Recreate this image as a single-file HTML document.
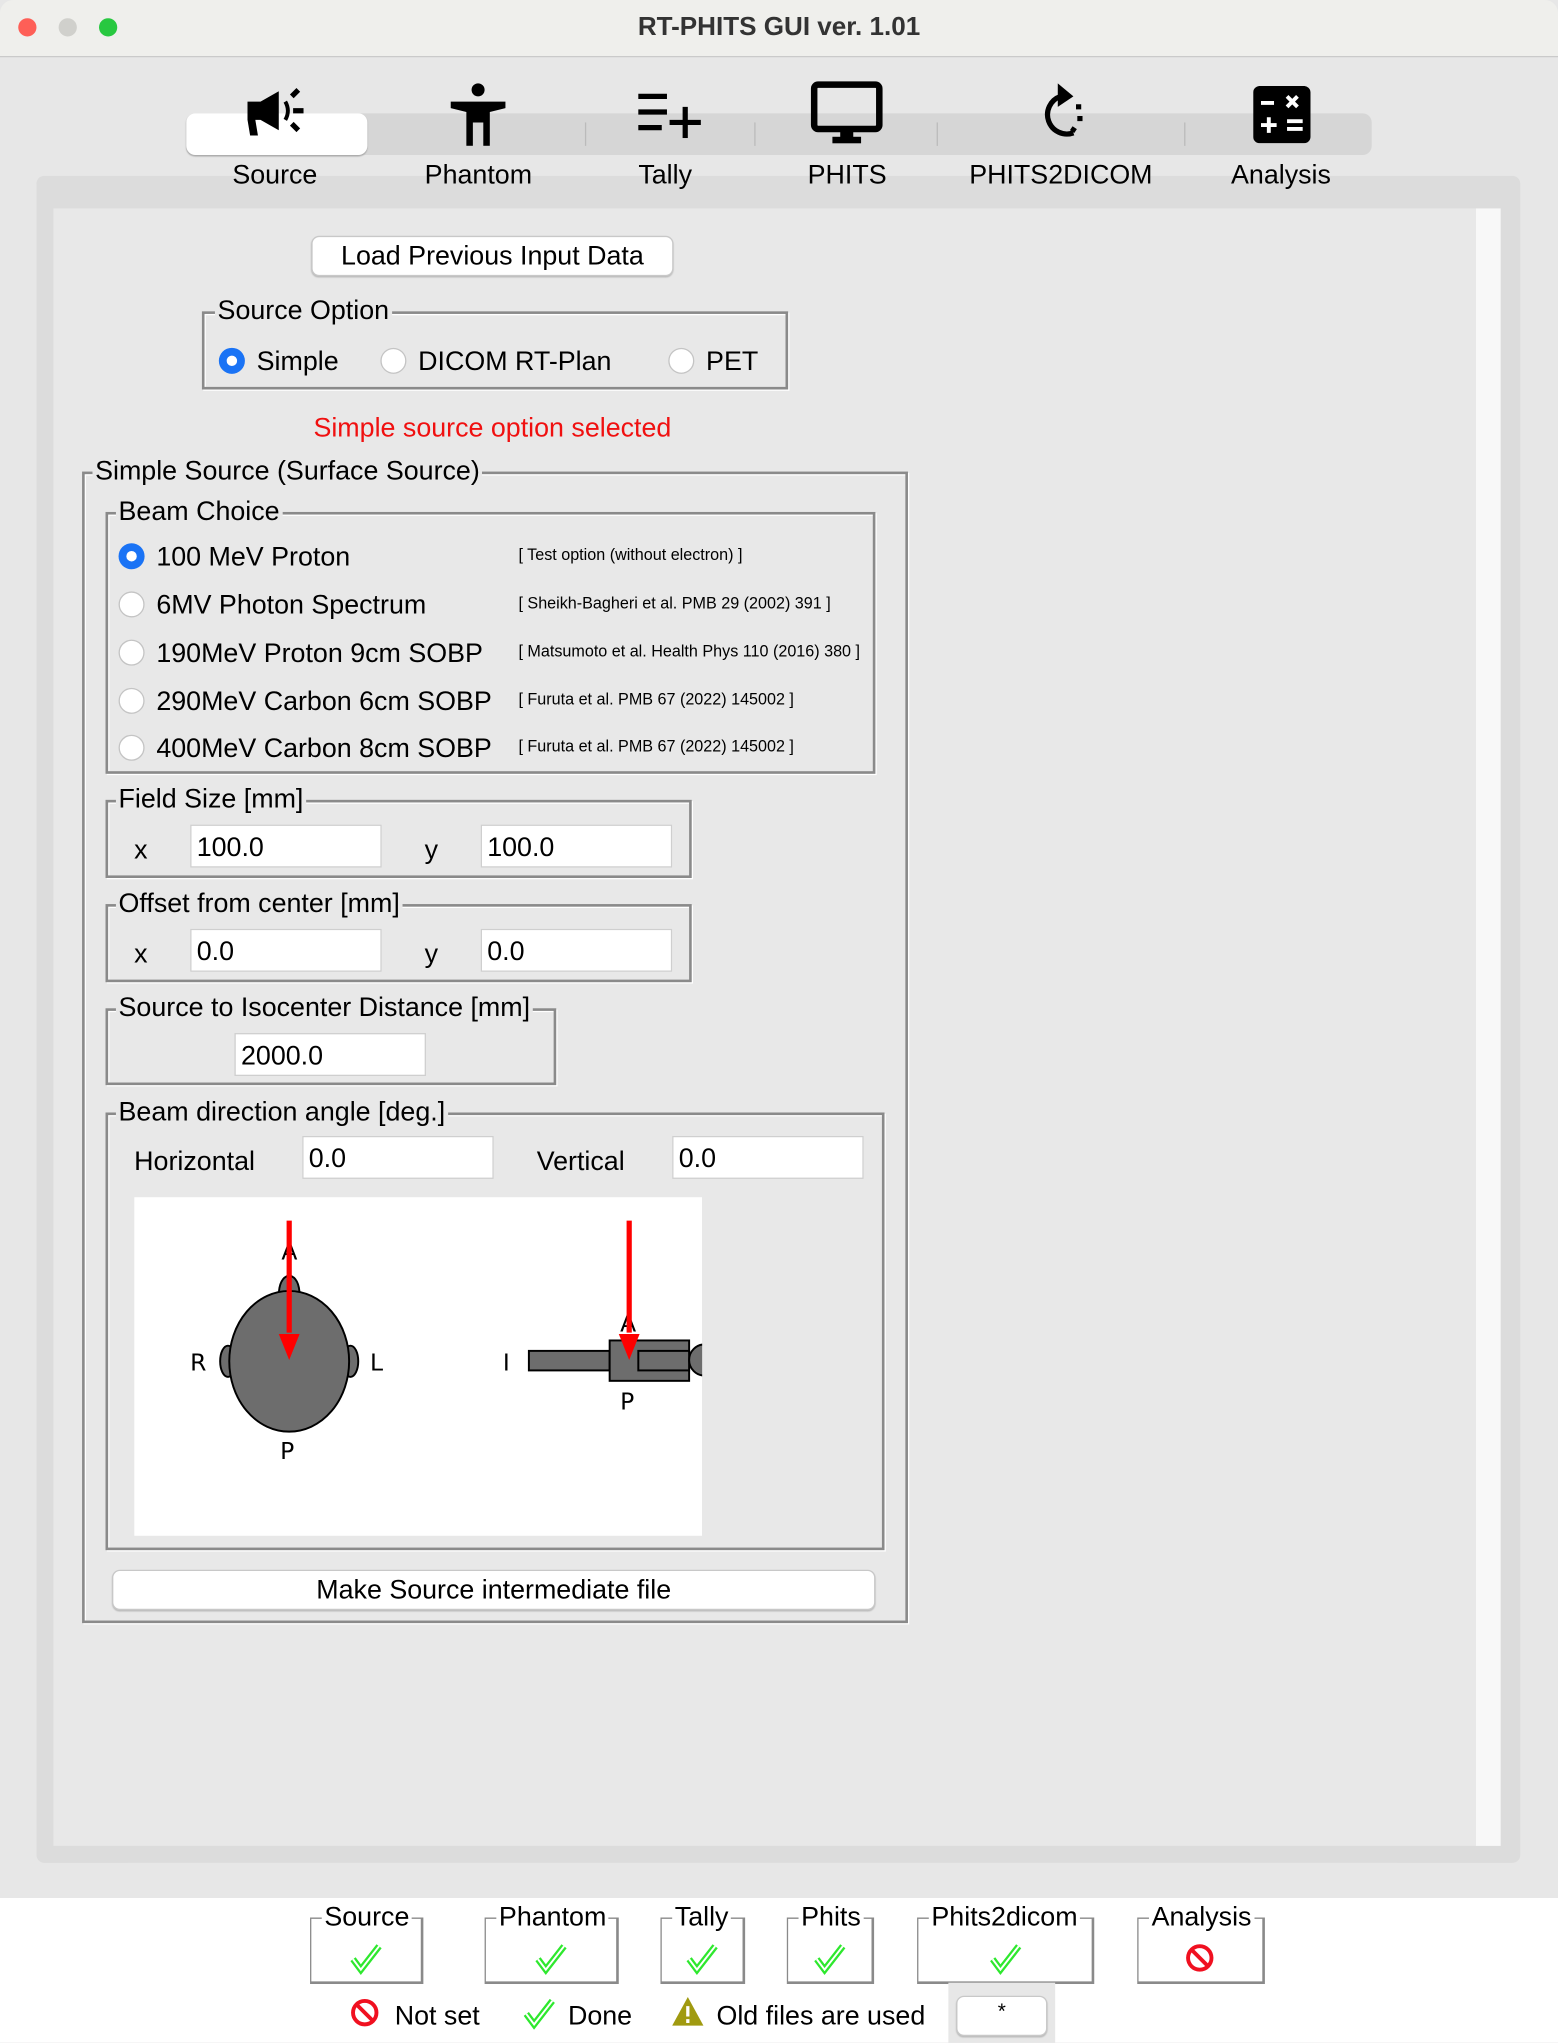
<!DOCTYPE html>
<html><head><meta charset="utf-8">
<style>
html,body{margin:0;padding:0;width:1558px;height:2042px;overflow:hidden;background:#e7e7e7}
#root{position:absolute;left:0;top:0;width:1196px;height:1568px;transform:scale(1.30268);transform-origin:0 0;font-family:"Liberation Sans",sans-serif;color:#000;background:#e7e7e7}
.a{position:absolute}
.t{position:absolute;white-space:nowrap;font-size:20.6px;line-height:26px;z-index:2}
.grp{position:absolute;border:2px solid #8a8a8a;box-shadow:inset 1px 1px 0 #fff,1px 1px 0 #fff}
.lg{position:absolute;top:-15px;left:8px;background:#e8e8e8;padding:0 2px;font-size:20.6px;line-height:26px;white-space:nowrap}
.inp{position:absolute;background:#fff;border:1px solid #cfcfcf;height:33px;font-size:20.6px;line-height:34px;padding-left:4px;box-sizing:border-box}
.btn{position:absolute;background:#fff;border:1px solid #c8c8c8;border-radius:6px;box-shadow:0 1px 1px #bbb;text-align:center;font-size:20.6px;box-sizing:border-box}
.rd{position:absolute;width:20px;height:20px;border-radius:50%;background:#fff;border:1px solid #c4c4c4;box-sizing:border-box}
.rd.on{background:#1a73f5;border:none}
.rd.on:after{content:"";position:absolute;left:6px;top:6px;width:8px;height:8px;border-radius:50%;background:#fff}
.ref{position:absolute;font-size:12.4px;white-space:nowrap}
.sb{position:absolute;border:2px solid #8a8a8a;border-top:1px solid #8a8a8a;border-left:1px solid #8a8a8a;background:#fff}
.sb .lg{background:#fff;top:-14px;left:8px}
</style></head><body><div id="root">
<!-- title bar -->
<div class="a" style="left:0;top:0;width:1196px;height:43px;background:#efefec;border-bottom:1px solid #c9c9c9;border-radius:10px 10px 0 0"></div>
<div class="a" style="left:14px;top:14px;width:14px;height:14px;border-radius:50%;background:#fe5f57"></div>
<div class="a" style="left:45px;top:14px;width:14px;height:14px;border-radius:50%;background:#d0d0cc"></div>
<div class="a" style="left:76px;top:14px;width:14px;height:14px;border-radius:50%;background:#28c840"></div>
<div class="t" style="left:0;width:1196px;text-align:center;top:8px;font-weight:bold;font-size:20px;color:#333">RT-PHITS GUI ver. 1.01</div>

<!-- panels -->
<div class="a" style="left:28px;top:135px;width:1139px;height:1295px;background:#dcdcdc;border-radius:6px"></div>
<div class="a" style="left:41px;top:160px;width:1092px;height:1257px;background:#e8e8e8"></div>
<div class="a" style="left:1133px;top:160px;width:19px;height:1257px;background:#f8f8f8"></div>

<!-- segmented -->
<div class="a" style="left:143px;top:87px;width:910px;height:32px;background:#d6d6d6;border-radius:7px"></div>
<div class="a" style="left:143px;top:87px;width:139px;height:32px;background:#fff;border-radius:7px;box-shadow:0 1px 1px #aaa"></div>
<div class="a" style="left:449px;top:94px;width:1px;height:18px;background:#bbb"></div>
<div class="a" style="left:579px;top:94px;width:1px;height:18px;background:#bbb"></div>
<div class="a" style="left:719px;top:94px;width:1px;height:18px;background:#bbb"></div>
<div class="a" style="left:909px;top:94px;width:1px;height:18px;background:#bbb"></div>
<!-- icons -->
<svg class="a" style="left:186px;top:64px" width="52" height="48" viewBox="0 0 52 48"><path d="M4 14h10l14-8v30l-14-8h-4l2 12h-6l-2-12z" fill="#000"/><path d="M33 14q4 7 0 14" stroke="#000" stroke-width="3" fill="none"/><path d="M38 10l5-5M39 21h8M38 31l5 5" stroke="#000" stroke-width="4"/></svg>
<svg class="a" style="left:344px;top:62px" width="46" height="50" viewBox="0 0 46 50"><circle cx="23" cy="7" r="5"/><path d="M2 16h42v5l-12 3v26h-5v-18h-8v18h-5v-26l-12-3z"/></svg>
<svg class="a" style="left:488px;top:70px" width="52" height="36" viewBox="0 0 52 36"><path d="M2 4h22M2 16h22M2 28h18M38 12v24M26 24h24" stroke="#000" stroke-width="4"/></svg>
<svg class="a" style="left:622px;top:62px" width="56" height="50" viewBox="0 0 56 50"><rect x="3" y="3" width="50" height="34" rx="3" fill="none" stroke="#000" stroke-width="5"/><rect x="23" y="37" width="10" height="7"/><rect x="17" y="43" width="22" height="5"/></svg>
<svg class="a" style="left:794px;top:62px" width="42" height="46" viewBox="0 0 42 46"><path d="M20 12A14 14 0 1 0 30 40" stroke="#000" stroke-width="4" fill="none"/><path d="M18 2l12 10-12 8z"/><path d="M34 18v4M35 27v4M31 36l-2 3" stroke="#000" stroke-width="4"/></svg>
<svg class="a" style="left:962px;top:66px" width="44" height="44" viewBox="0 0 44 44"><rect width="44" height="44" rx="5"/><path d="M6 13h10M26 8l8 8M34 8l-8 8M6 30h12M12 24v12M26 27h12M26 33h12" stroke="#fff" stroke-width="3"/></svg>
<div class="t" style="left:143px;width:136px;text-align:center;top:122px">Source</div>
<div class="t" style="left:326px;top:122px">Phantom</div>
<div class="t" style="left:490px;top:122px">Tally</div>
<div class="t" style="left:620px;top:122px">PHITS</div>
<div class="t" style="left:744px;top:122px">PHITS2DICOM</div>
<div class="t" style="left:945px;top:122px">Analysis</div>

<div class="btn" style="left:239px;top:181px;width:278px;height:31px;line-height:29px">Load Previous Input Data</div>

<div class="grp" style="left:155px;top:239px;width:446px;height:56px"><div class="lg">Source Option</div></div>
<div class="rd on" style="left:168px;top:267px"></div><div class="t" style="left:197px;top:265px">Simple</div>
<div class="rd" style="left:292px;top:267px"></div><div class="t" style="left:321px;top:265px">DICOM RT-Plan</div>
<div class="rd" style="left:513px;top:267px"></div><div class="t" style="left:542px;top:265px">PET</div>

<div class="t" style="left:0;width:756px;text-align:center;top:316px;color:#f01010">Simple source option selected</div>

<div class="grp" style="left:63px;top:362px;width:630px;height:880px"><div class="lg" style="left:6px">Simple Source (Surface Source)</div></div>

<div class="grp" style="left:81px;top:393px;width:587px;height:197px"><div class="lg" style="left:6px">Beam Choice</div></div>
<div class="rd on" style="left:91px;top:417px"></div><div class="t" style="left:120px;top:415px">100 MeV Proton</div><div class="ref" style="left:398px;top:419px">[ Test option (without electron) ]</div>
<div class="rd" style="left:91px;top:454px"></div><div class="t" style="left:120px;top:452px">6MV Photon Spectrum</div><div class="ref" style="left:398px;top:456px">[ Sheikh-Bagheri et al. PMB 29 (2002) 391 ]</div>
<div class="rd" style="left:91px;top:491px"></div><div class="t" style="left:120px;top:489px">190MeV Proton 9cm SOBP</div><div class="ref" style="left:398px;top:493px">[ Matsumoto et al. Health Phys 110 (2016) 380 ]</div>
<div class="rd" style="left:91px;top:528px"></div><div class="t" style="left:120px;top:526px">290MeV Carbon 6cm SOBP</div><div class="ref" style="left:398px;top:530px">[ Furuta et al. PMB 67 (2022) 145002 ]</div>
<div class="rd" style="left:91px;top:564px"></div><div class="t" style="left:120px;top:562px">400MeV Carbon 8cm SOBP</div><div class="ref" style="left:398px;top:566px">[ Furuta et al. PMB 67 (2022) 145002 ]</div>

<div class="grp" style="left:81px;top:614px;width:446px;height:56px"><div class="lg" style="left:6px">Field Size [mm]</div></div>
<div class="t" style="left:103px;top:640px">x</div><div class="inp" style="left:146px;top:633px;width:147px">100.0</div>
<div class="t" style="left:326px;top:640px">y</div><div class="inp" style="left:369px;top:633px;width:147px">100.0</div>

<div class="grp" style="left:81px;top:694px;width:446px;height:56px"><div class="lg" style="left:6px">Offset from center [mm]</div></div>
<div class="t" style="left:103px;top:720px">x</div><div class="inp" style="left:146px;top:713px;width:147px">0.0</div>
<div class="t" style="left:326px;top:720px">y</div><div class="inp" style="left:369px;top:713px;width:147px">0.0</div>

<div class="grp" style="left:81px;top:774px;width:342px;height:55px"><div class="lg" style="left:6px">Source to Isocenter Distance [mm]</div></div>
<div class="inp" style="left:180px;top:793px;width:147px">2000.0</div>

<div class="grp" style="left:81px;top:854px;width:594px;height:332px"><div class="lg" style="left:6px">Beam direction angle [deg.]</div></div>
<div class="t" style="left:103px;top:879px">Horizontal</div><div class="inp" style="left:232px;top:872px;width:147px">0.0</div>
<div class="t" style="left:412px;top:879px">Vertical</div><div class="inp" style="left:516px;top:872px;width:147px">0.0</div>

<svg class="a" style="left:103px;top:919px" width="436" height="260" viewBox="0 0 436 260" font-family="DejaVu Sans, sans-serif" font-size="18">
<rect width="436" height="260" fill="#fff"/>
<path d="M111 76q0-14 8-16q8 2 8 16z" fill="#6d6d6d" stroke="#000" stroke-width="1.5"/>
<ellipse cx="72" cy="126" rx="6" ry="12" fill="#6d6d6d" stroke="#000" stroke-width="1.5"/>
<ellipse cx="166" cy="126" rx="6" ry="12" fill="#6d6d6d" stroke="#000" stroke-width="1.5"/>
<ellipse cx="119" cy="126" rx="46" ry="54" fill="#6d6d6d" stroke="#000" stroke-width="1.5"/>
<text x="113" y="48">A</text>
<text x="43" y="133">R</text><text x="181" y="133">L</text><text x="112" y="201">P</text>
<line x1="119" y1="18" x2="119" y2="104" stroke="#f00" stroke-width="4"/>
<path d="M111 105h16l-8 20z" fill="#f00"/>
<rect x="303" y="118" width="62" height="15" fill="#6d6d6d" stroke="#000" stroke-width="1.5"/>
<rect x="365" y="110" width="61" height="31" fill="#6d6d6d" stroke="#000" stroke-width="1.5"/>
<rect x="387" y="118" width="39" height="15" fill="#6d6d6d" stroke="#000" stroke-width="1.5"/>
<circle cx="438" cy="125" r="12" fill="#6d6d6d" stroke="#000" stroke-width="1.5"/>
<text x="283" y="133">I</text><text x="373" y="163">P</text><text x="373" y="103">A</text>
<line x1="380" y1="18" x2="380" y2="104" stroke="#f00" stroke-width="4"/>
<path d="M372 105h16l-8 20z" fill="#f00"/>
</svg>

<div class="btn" style="left:86px;top:1205px;width:586px;height:31px;line-height:29px">Make Source intermediate file</div>

<!-- bottom status -->
<div class="a" style="left:0;top:1457px;width:1196px;height:111px;background:#fff"></div>
<div class="sb" style="left:238px;top:1472px;width:84px;height:48px"><div class="lg">Source</div></div>
<div class="sb" style="left:372px;top:1472px;width:100px;height:48px"><div class="lg">Phantom</div></div>
<div class="sb" style="left:507px;top:1472px;width:62px;height:48px"><div class="lg">Tally</div></div>
<div class="sb" style="left:604px;top:1472px;width:64px;height:48px"><div class="lg">Phits</div></div>
<div class="sb" style="left:704px;top:1472px;width:133px;height:48px"><div class="lg">Phits2dicom</div></div>
<div class="sb" style="left:873px;top:1472px;width:95px;height:48px"><div class="lg">Analysis</div></div>
<svg width="0" height="0" style="position:absolute"><defs>
<g id="ck"><path d="M2 12l6 8 14-18" fill="none" stroke="#2ee82e" stroke-width="5"/><path d="M2 12l6 8 14-18" fill="none" stroke="#fff" stroke-width="1.5"/></g>
<g id="no"><circle cx="11" cy="11" r="9" fill="none" stroke="#f01020" stroke-width="3"/><path d="M5 5l12 12" stroke="#f01020" stroke-width="3"/></g>
</defs></svg>
<svg class="a" style="left:269px;top:1492px" width="26" height="24"><use href="#ck"/></svg>
<svg class="a" style="left:411px;top:1492px" width="26" height="24"><use href="#ck"/></svg>
<svg class="a" style="left:527px;top:1492px" width="26" height="24"><use href="#ck"/></svg>
<svg class="a" style="left:625px;top:1492px" width="26" height="24"><use href="#ck"/></svg>
<svg class="a" style="left:760px;top:1492px" width="26" height="24"><use href="#ck"/></svg>
<svg class="a" style="left:910px;top:1492px" width="24" height="24"><use href="#no"/></svg>
<svg class="a" style="left:269px;top:1534px" width="24" height="24"><use href="#no"/></svg>
<div class="t" style="left:303px;top:1535px">Not set</div>
<svg class="a" style="left:402px;top:1534px" width="26" height="24"><use href="#ck"/></svg>
<div class="t" style="left:436px;top:1535px">Done</div>
<svg class="a" style="left:515px;top:1532px" width="26" height="24"><path d="M13 1l12 22H1z" fill="#a09a10"/><path d="M13 8v8M13 18v3" stroke="#fff" stroke-width="2.5"/></svg>
<div class="t" style="left:550px;top:1535px">Old files are used</div>
<div class="a" style="left:728px;top:1522px;width:82px;height:46px;background:#e7e7e7"></div>
<div class="btn" style="left:734px;top:1532px;width:70px;height:31px;line-height:24px;font-size:16px">*</div>
</div></body></html>
